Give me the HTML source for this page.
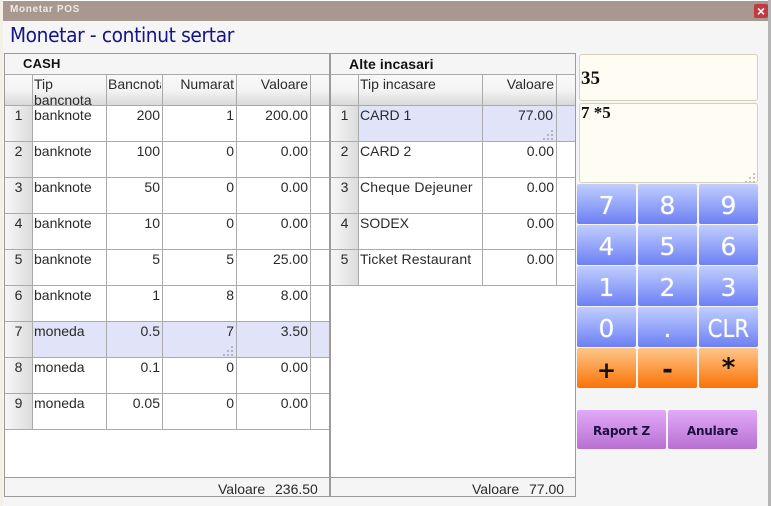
<!DOCTYPE html>
<html><head><meta charset="utf-8"><style>
html,body{margin:0;padding:0;width:771px;height:506px;overflow:hidden;background:#fff}
body{font-family:"Liberation Sans",sans-serif;color:#222;position:relative}
div{position:absolute;box-sizing:border-box}
.t{font-size:14px;line-height:16px;white-space:nowrap;color:#2a2a2a}
.r{text-align:right}
.hl{background:#e1e3f8}
.rh{background:linear-gradient(90deg,#f7f7f7,#dcdcdc);text-align:center;font-size:14px;padding-top:2px;line-height:16px;color:#2a2a2a}
.hg{background:linear-gradient(180deg,#f8f8f8 0%,#f4f4f4 50%,#d9d9d9 100%)}
.v{background:#aaa;width:1px}
.h{background:#aaa;height:1px}
.b{display:flex;align-items:center;justify-content:center;font-family:"DejaVu Sans",sans-serif;color:#fff;font-size:24px;border-radius:2px}
.bl{background:linear-gradient(180deg,#c0cefe,#6d80f4);width:59px;height:40px;color:#fff;text-shadow:0 0 1px rgba(255,255,255,.6);font-size:25px;padding-top:2px}
.or{background:linear-gradient(180deg,#fdc78a,#fb7205);width:59px;height:40px;color:#111;font-weight:bold;font-size:26px}
.pu{background:linear-gradient(180deg,#e2aaf8,#b86fd2);height:39px;color:#1c1040;font-weight:bold;font-size:12px;letter-spacing:-.2px;font-family:"DejaVu Sans",sans-serif;padding-top:3px}
.grip{width:12px;height:11px}
</style></head><body>
<div style="left:3px;top:1px;width:765px;height:505px;background:#f5f5f5"></div>
<div style="left:768px;top:0;width:3px;height:506px;background:#b5b5b5"></div>
<div style="left:0;top:0;width:3px;height:506px;background:#f3f1e6"></div>
<div style="left:3px;top:1px;width:765px;height:20px;background:#a89890"></div>
<div style="left:10px;top:4px;font-size:10px;line-height:12px;font-weight:bold;color:#efeae6;letter-spacing:.65px;white-space:nowrap">Monetar POS</div>
<div style="left:754px;top:4px;width:14px;height:14px;background:#c2393f;border-radius:2px;color:#fff;font-size:14px;line-height:14px;text-align:center;font-weight:bold">×</div>
<div style="left:10px;top:23px;font-size:20px;line-height:24px;color:#14148c;font-family:'DejaVu Sans',sans-serif;letter-spacing:-.4px;white-space:nowrap;transform:scaleX(.93);transform-origin:0 0">Monetar - continut sertar</div>

<div style="left:4px;top:53px;width:326px;height:444px;background:#fff;border:1px solid #a09a96"></div>
<div style="left:330px;top:53px;width:246px;height:444px;background:#fff;border:1px solid #a09a96"></div>
<div style="left:5px;top:54px;width:324px;height:21px;background:#f5f5f5;border-bottom:1px solid #aaa"></div>
<div style="left:331px;top:54px;width:244px;height:21px;background:#f5f5f5;border-bottom:1px solid #aaa"></div>
<div class="t" style="left:23px;top:56px;font-weight:bold;font-size:13px;letter-spacing:.2px;color:#111">CASH</div>
<div class="t" style="left:349px;top:56px;font-weight:bold;font-size:14px;letter-spacing:.1px;color:#111">Alte incasari</div>

<div class="hg" style="left:5px;top:75px;width:324px;height:30px"></div>
<div class="hg" style="left:331px;top:75px;width:244px;height:30px"></div>

<div class="hl" style="left:33px;top:322px;width:296px;height:35px"></div>
<div class="hl" style="left:359px;top:106px;width:216px;height:35px"></div>

<div class="rh" style="left:5px;top:105px;width:27px;height:36px">1</div>
<div class="rh" style="left:5px;top:141px;width:27px;height:36px">2</div>
<div class="rh" style="left:5px;top:177px;width:27px;height:36px">3</div>
<div class="rh" style="left:5px;top:213px;width:27px;height:36px">4</div>
<div class="rh" style="left:5px;top:249px;width:27px;height:36px">5</div>
<div class="rh" style="left:5px;top:285px;width:27px;height:36px">6</div>
<div class="rh" style="left:5px;top:321px;width:27px;height:36px">7</div>
<div class="rh" style="left:5px;top:357px;width:27px;height:36px">8</div>
<div class="rh" style="left:5px;top:393px;width:27px;height:36px">9</div>
<div class="rh" style="left:331px;top:105px;width:27px;height:36px">1</div>
<div class="rh" style="left:331px;top:141px;width:27px;height:36px">2</div>
<div class="rh" style="left:331px;top:177px;width:27px;height:36px">3</div>
<div class="rh" style="left:331px;top:213px;width:27px;height:36px">4</div>
<div class="rh" style="left:331px;top:249px;width:27px;height:36px">5</div>

<div class="v" style="left:32px;top:75px;height:354px"></div>
<div class="v" style="left:106px;top:75px;height:354px"></div>
<div class="v" style="left:162px;top:75px;height:354px"></div>
<div class="v" style="left:236px;top:75px;height:354px"></div>
<div class="v" style="left:310px;top:75px;height:354px"></div>
<div class="v" style="left:358px;top:75px;height:210px"></div>
<div class="v" style="left:482px;top:75px;height:210px"></div>
<div class="v" style="left:556px;top:75px;height:210px"></div>

<div class="h" style="left:5px;top:105px;width:324px"></div>
<div class="h" style="left:5px;top:141px;width:324px"></div>
<div class="h" style="left:5px;top:177px;width:324px"></div>
<div class="h" style="left:5px;top:213px;width:324px"></div>
<div class="h" style="left:5px;top:249px;width:324px"></div>
<div class="h" style="left:5px;top:285px;width:324px"></div>
<div class="h" style="left:5px;top:321px;width:324px"></div>
<div class="h" style="left:5px;top:357px;width:324px"></div>
<div class="h" style="left:5px;top:393px;width:324px"></div>
<div class="h" style="left:5px;top:429px;width:324px"></div>
<div class="h" style="left:331px;top:105px;width:244px"></div>
<div class="h" style="left:331px;top:141px;width:244px"></div>
<div class="h" style="left:331px;top:177px;width:244px"></div>
<div class="h" style="left:331px;top:213px;width:244px"></div>
<div class="h" style="left:331px;top:249px;width:244px"></div>
<div class="h" style="left:331px;top:285px;width:244px"></div>

<div class="t" style="left:34px;top:76px">Tip</div>
<div class="t" style="left:34px;top:92px;height:13px;overflow:hidden">bancnota</div>
<div class="t" style="left:108px;top:76px;width:53px;overflow:hidden">Bancnota</div>
<div class="t r" style="left:164px;top:76px;width:70px">Numarat</div>
<div class="t r" style="left:238px;top:76px;width:70px">Valoare</div>
<div class="t" style="left:360px;top:76px">Tip incasare</div>
<div class="t r" style="left:484px;top:76px;width:70px">Valoare</div>

<div class="t" style="left:34px;top:107px">banknote</div><div class="t r" style="left:108px;top:107px;width:52px">200</div><div class="t r" style="left:164px;top:107px;width:70px">1</div><div class="t r" style="left:238px;top:107px;width:70px">200.00</div>
<div class="t" style="left:34px;top:143px">banknote</div><div class="t r" style="left:108px;top:143px;width:52px">100</div><div class="t r" style="left:164px;top:143px;width:70px">0</div><div class="t r" style="left:238px;top:143px;width:70px">0.00</div>
<div class="t" style="left:34px;top:179px">banknote</div><div class="t r" style="left:108px;top:179px;width:52px">50</div><div class="t r" style="left:164px;top:179px;width:70px">0</div><div class="t r" style="left:238px;top:179px;width:70px">0.00</div>
<div class="t" style="left:34px;top:215px">banknote</div><div class="t r" style="left:108px;top:215px;width:52px">10</div><div class="t r" style="left:164px;top:215px;width:70px">0</div><div class="t r" style="left:238px;top:215px;width:70px">0.00</div>
<div class="t" style="left:34px;top:251px">banknote</div><div class="t r" style="left:108px;top:251px;width:52px">5</div><div class="t r" style="left:164px;top:251px;width:70px">5</div><div class="t r" style="left:238px;top:251px;width:70px">25.00</div>
<div class="t" style="left:34px;top:287px">banknote</div><div class="t r" style="left:108px;top:287px;width:52px">1</div><div class="t r" style="left:164px;top:287px;width:70px">8</div><div class="t r" style="left:238px;top:287px;width:70px">8.00</div>
<div class="t" style="left:34px;top:323px">moneda</div><div class="t r" style="left:108px;top:323px;width:52px">0.5</div><div class="t r" style="left:164px;top:323px;width:70px">7</div><div class="t r" style="left:238px;top:323px;width:70px">3.50</div>
<div class="t" style="left:34px;top:359px">moneda</div><div class="t r" style="left:108px;top:359px;width:52px">0.1</div><div class="t r" style="left:164px;top:359px;width:70px">0</div><div class="t r" style="left:238px;top:359px;width:70px">0.00</div>
<div class="t" style="left:34px;top:395px">moneda</div><div class="t r" style="left:108px;top:395px;width:52px">0.05</div><div class="t r" style="left:164px;top:395px;width:70px">0</div><div class="t r" style="left:238px;top:395px;width:70px">0.00</div>

<div class="t" style="left:360px;top:107px">CARD 1</div><div class="t r" style="left:484px;top:107px;width:69px">77.00</div>
<div class="t" style="left:360px;top:143px">CARD 2</div><div class="t r" style="left:484px;top:143px;width:70px">0.00</div>
<div class="t" style="left:360px;top:179px;letter-spacing:.2px">Cheque Dejeuner</div><div class="t r" style="left:484px;top:179px;width:70px">0.00</div>
<div class="t" style="left:360px;top:215px">SODEX</div><div class="t r" style="left:484px;top:215px;width:70px">0.00</div>
<div class="t" style="left:360px;top:251px;letter-spacing:.12px">Ticket Restaurant</div><div class="t r" style="left:484px;top:251px;width:70px">0.00</div>

<div class="grip" style="left:222px;top:343px"><svg width="12" height="11" fill="#b4b4c0"><rect x="9" y="1" width="2" height="2"/><rect x="5" y="5" width="2" height="2"/><rect x="9" y="5" width="2" height="2"/><rect x="1" y="9" width="2" height="2"/><rect x="5" y="9" width="2" height="2"/><rect x="9" y="9" width="2" height="2"/></svg></div>
<div class="grip" style="left:542px;top:127px"><svg width="12" height="11" fill="#b4b4c0"><rect x="9" y="1" width="2" height="2"/><rect x="5" y="5" width="2" height="2"/><rect x="9" y="5" width="2" height="2"/><rect x="1" y="9" width="2" height="2"/><rect x="5" y="9" width="2" height="2"/><rect x="9" y="9" width="2" height="2"/></svg></div>

<div style="left:5px;top:477px;width:324px;height:19px;background:#f5f5f5;border-top:1px solid #a09a96"></div>
<div style="left:331px;top:477px;width:244px;height:19px;background:#f5f5f5;border-top:1px solid #a09a96"></div>
<div class="t" style="left:218px;top:481px;word-spacing:1px">Valoare&nbsp; 236.50</div>
<div class="t" style="left:472px;top:481px;word-spacing:1px">Valoare&nbsp; 77.00</div>

<div style="left:579px;top:54px;width:179px;height:47px;background:#fffdf3;border:1px solid #d8d0b8;border-radius:3px"></div>
<div style="left:579px;top:103px;width:179px;height:80px;background:#fffdf3;border:1px solid #d8d0b8;border-radius:3px"></div>
<div style="left:581px;top:69px;font-family:'Liberation Serif',serif;font-weight:bold;font-size:19px;line-height:20px;color:#111">35</div>
<div style="left:581px;top:104px;font-family:'Liberation Serif',serif;font-weight:bold;font-size:17px;line-height:18px;color:#111;white-space:nowrap">7 *5</div>
<div class="grip" style="left:744px;top:170px"><svg width="12" height="11" fill="#c4c4b8"><rect x="9" y="1" width="2" height="2"/><rect x="5" y="5" width="2" height="2"/><rect x="9" y="5" width="2" height="2"/><rect x="1" y="9" width="2" height="2"/><rect x="5" y="9" width="2" height="2"/><rect x="9" y="9" width="2" height="2"/></svg></div>

<div class="b bl" style="left:577px;top:184px">7</div>
<div class="b bl" style="left:638px;top:184px">8</div>
<div class="b bl" style="left:699px;top:184px">9</div>
<div class="b bl" style="left:577px;top:225px">4</div>
<div class="b bl" style="left:638px;top:225px">5</div>
<div class="b bl" style="left:699px;top:225px">6</div>
<div class="b bl" style="left:577px;top:266px">1</div>
<div class="b bl" style="left:638px;top:266px">2</div>
<div class="b bl" style="left:699px;top:266px">3</div>
<div class="b bl" style="left:577px;top:307px">0</div>
<div class="b bl" style="left:638px;top:307px">.</div>
<div class="b bl" style="left:699px;top:307px"><span style="display:inline-block;transform:scaleX(.85)">CLR</span></div>
<div class="b or" style="left:577px;top:348px;font-size:23px;padding-top:5px">+</div>
<div class="b or" style="left:638px;top:348px;padding-top:4px">-</div>
<div class="b or" style="left:699px;top:348px">*</div>
<div class="b pu" style="left:577px;top:410px;width:89px">Raport Z</div>
<div class="b pu" style="left:668px;top:410px;width:89px">Anulare</div>
</body></html>
